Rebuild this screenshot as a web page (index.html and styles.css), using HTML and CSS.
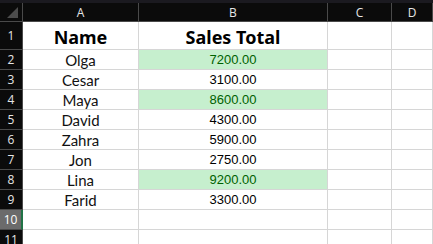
FILE: index.html
```html
<!DOCTYPE html>
<html>
<head>
<meta charset="utf-8">
<link rel="stylesheet" href="styles.css">
</head>
<body>
<div class="topbar"></div>
<div class="sheet">
  <div class="row colhead">
    <div class="rh corner"><span class="tri"></span></div>
    <div class="c a">A</div>
    <div class="c b">B</div>
    <div class="c cc">C</div>
    <div class="c d">D</div>
  </div>
  <div class="row r1">
    <div class="rh">1</div>
    <div class="c a hd">Name</div>
    <div class="c b hd">Sales Total</div>
    <div class="c cc"></div>
    <div class="c d"></div>
  </div>
  <div class="row"><div class="rh">2</div><div class="c a nm">Olga</div><div class="c b num hi">7200.00</div><div class="c cc"></div><div class="c d"></div></div>
  <div class="row"><div class="rh">3</div><div class="c a nm">Cesar</div><div class="c b num">3100.00</div><div class="c cc"></div><div class="c d"></div></div>
  <div class="row"><div class="rh">4</div><div class="c a nm">Maya</div><div class="c b num hi">8600.00</div><div class="c cc"></div><div class="c d"></div></div>
  <div class="row"><div class="rh">5</div><div class="c a nm">David</div><div class="c b num">4300.00</div><div class="c cc"></div><div class="c d"></div></div>
  <div class="row"><div class="rh">6</div><div class="c a nm">Zahra</div><div class="c b num">5900.00</div><div class="c cc"></div><div class="c d"></div></div>
  <div class="row"><div class="rh">7</div><div class="c a nm">Jon</div><div class="c b num">2750.00</div><div class="c cc"></div><div class="c d"></div></div>
  <div class="row"><div class="rh">8</div><div class="c a nm">Lina</div><div class="c b num hi">9200.00</div><div class="c cc"></div><div class="c d"></div></div>
  <div class="row"><div class="rh">9</div><div class="c a nm">Farid</div><div class="c b num">3300.00</div><div class="c cc"></div><div class="c d"></div></div>
  <div class="row"><div class="rh sel">10</div><div class="c a"></div><div class="c b"></div><div class="c cc"></div><div class="c d"></div></div>
  <div class="row"><div class="rh">11</div><div class="c a"></div><div class="c b"></div><div class="c cc"></div><div class="c d"></div></div>
</div>
</body>
</html>
```
FILE: styles.css
```css
html, body {
  margin: 0;
  padding: 0;
  background: #ffffff;
  overflow: hidden;
}
body {
  width: 433px;
  height: 244px;
  font-family: "Liberation Sans", Arial, sans-serif;
}
.topbar {
  height: 3px;
  background: #1b1a20;
}
.sheet {
  display: flex;
  flex-direction: column;
}
.row {
  display: flex;
  height: 20px;
}
.row.r1 { height: 28px; }
.row.colhead { height: 19px; }
.rh {
  width: 22px;
  flex: none;
  background: #0b0b0b;
  color: #e6e6e6;
  border-right: 1px solid #4a4a4a;
  border-bottom: 1px solid #4a4a4a;
  font-family: "Open Sans", "Noto Sans", sans-serif;
  font-size: 12px;
  display: flex;
  align-items: center;
  justify-content: center;
  box-sizing: content-box;
}
.rh.sel {
  background: #6b6b6b;
  color: #ffffff;
  border-right: 2px solid #217346;
  width: 21px;
}
.corner {
  position: relative;
}
.tri {
  position: absolute;
  left: 7px;
  top: 4px;
  width: 0;
  height: 0;
  border-left: 11px solid transparent;
  border-bottom: 11px solid #4c4c4c;
}
.c {
  flex: none;
  box-sizing: border-box;
  border-right: 1px solid #d6d6d6;
  border-bottom: 1px solid #d6d6d6;
  display: flex;
  align-items: center;
  justify-content: center;
  color: #111;
}
.c.a { width: 116px; }
.c.b { width: 189px; }
.c.cc { width: 64px; }
.c.d { flex: 1; }
.colhead .c {
  background: #0b0b0b;
  color: #e6e6e6;
  border-right: 1px solid #4a4a4a;
  border-bottom: 1px solid #4a4a4a;
  font-family: "Open Sans", "Noto Sans", sans-serif;
  font-size: 12px;
}
.hd {
  font-family: "Noto Sans", sans-serif;
  font-weight: 700;
  font-size: 18px;
  color: #000;
  padding-top: 2px;
}
.nm {
  font-family: Lato, "Noto Sans", sans-serif;
  font-size: 15px;
  color: #111;
}
.num {
  font-family: "Liberation Sans", Arial, sans-serif;
  font-size: 13px;
  color: #000;
}
.num.hi {
  background: #c6efce;
  color: #006100;
}
```
